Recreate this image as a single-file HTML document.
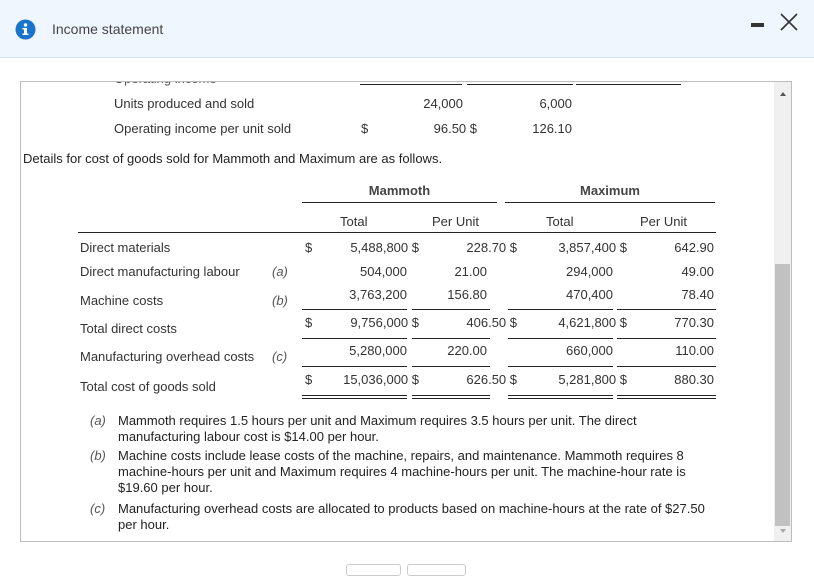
<!DOCTYPE html>
<html><head><meta charset="utf-8"><style>
*{margin:0;padding:0;box-sizing:border-box}
body{width:814px;height:569px;background:#fff;font-family:"Liberation Sans",Arial,sans-serif;color:#333;font-size:13px;position:relative;overflow:hidden}
.a{position:absolute;white-space:nowrap;line-height:15px}
.r{position:absolute;white-space:nowrap;text-align:right;line-height:15px}
.l{position:absolute;height:1px;background:#222}
.hdr{position:absolute;left:0;top:0;width:814px;height:58px;background:#f0f6fd;border-bottom:1px solid #cfe4f8}
.box{position:absolute;left:20px;top:81px;width:772px;height:461px;border:1px solid #bdbdbd;overflow:hidden}
i{font-style:italic;color:#555}
</style></head><body>
<div class="hdr">
<svg style="position:absolute;left:15px;top:19px" width="21" height="21" viewBox="0 0 21 21"><circle cx="10.5" cy="10.5" r="10" fill="#1b74cc"/><rect x="9" y="9" width="3" height="7" fill="#fff"/><rect x="7.5" y="9" width="3" height="1.5" fill="#fff"/><rect x="7.5" y="14.5" width="6" height="1.5" fill="#fff"/><circle cx="10.5" cy="6" r="1.7" fill="#fff"/></svg>
<div class="a" style="left:52px;top:21px;font-size:14px;color:#444;line-height:16px">Income statement</div>
<div style="position:absolute;left:751px;top:23px;width:13px;height:4px;background:#333"></div>
<svg style="position:absolute;left:780px;top:13px" width="18" height="18" viewBox="0 0 18 18"><path d="M1 1L17 17M17 1L1 17" stroke="#333" stroke-width="1.6"/></svg>
</div>
<div class="box">
<div class="a" style="left:93px;top:-11px;color:#555">Operating income</div>
<div style="position:absolute;right:0;top:0;width:17px;height:459px;background:#f0f0f0"></div>
<div style="position:absolute;right:1px;top:182px;width:15px;height:262px;background:#c1c1c1"></div>
<div style="position:absolute;right:5px;top:10px;width:0;height:0;border-left:3px solid transparent;border-right:3px solid transparent;border-bottom:4px solid #555"></div>
<div style="position:absolute;right:5px;top:447px;width:0;height:0;border-left:3px solid transparent;border-right:3px solid transparent;border-top:4px solid #aaa"></div>
</div>
<div class="l" style="left:360px;top:84px;width:102px"></div>
<div class="l" style="left:467px;top:84px;width:106px"></div>
<div class="l" style="left:576px;top:84px;width:105px"></div>
<div class="a" style="left:114px;top:96px">Units produced and sold</div>
<div class="r" style="left:380px;width:83px;top:96px">24,000</div>
<div class="r" style="left:490px;width:82px;top:96px">6,000</div>
<div class="a" style="left:114px;top:121px">Operating income per unit sold</div>
<div class="a" style="left:361px;top:121px">$</div>
<div class="r" style="left:380px;width:97px;top:121px">96.50 $</div>
<div class="r" style="left:490px;width:82px;top:121px">126.10</div>
<div class="a" style="left:23px;top:151px;color:#222">Details for cost of goods sold for Mammoth and Maximum are as follows.</div>

<div class="a" style="left:302px;width:195px;text-align:center;top:183px;font-weight:bold;color:#444">Mammoth</div>
<div class="a" style="left:505px;width:210px;text-align:center;top:183px;font-weight:bold;color:#444">Maximum</div>
<div class="l" style="left:302px;top:202px;width:195px"></div>
<div class="l" style="left:505px;top:202px;width:210px"></div>
<div class="a" style="left:340px;top:214px">Total</div>
<div class="a" style="left:432px;top:214px">Per Unit</div>
<div class="a" style="left:546px;top:214px">Total</div>
<div class="a" style="left:640px;top:214px">Per Unit</div>
<div class="l" style="left:78px;top:232px;width:638px"></div>

<div class="a" style="left:80px;top:240px">Direct materials</div>
<div class="a" style="left:80px;top:264px">Direct manufacturing labour</div><div class="a" style="left:272px;top:264px"><i>(a)</i></div>
<div class="a" style="left:80px;top:293px">Machine costs</div><div class="a" style="left:272px;top:293px"><i>(b)</i></div>
<div class="a" style="left:80px;top:321px">Total direct costs</div>
<div class="a" style="left:80px;top:349px">Manufacturing overhead costs</div><div class="a" style="left:272px;top:349px"><i>(c)</i></div>
<div class="a" style="left:80px;top:379px">Total cost of goods sold</div>

<div class="a" style="left:305px;top:240px">$</div>
<div class="r" style="left:320px;width:99px;top:240px">5,488,800 $</div>
<div class="r" style="left:420px;width:97px;top:240px">228.70 $</div>
<div class="r" style="left:520px;width:107px;top:240px">3,857,400 $</div>
<div class="r" style="left:630px;width:84px;top:240px">642.90</div>

<div class="r" style="left:320px;width:87px;top:264px">504,000</div>
<div class="r" style="left:420px;width:67px;top:264px">21.00</div>
<div class="r" style="left:520px;width:93px;top:264px">294,000</div>
<div class="r" style="left:630px;width:84px;top:264px">49.00</div>

<div class="r" style="left:320px;width:87px;top:287px">3,763,200</div>
<div class="r" style="left:420px;width:67px;top:287px">156.80</div>
<div class="r" style="left:520px;width:93px;top:287px">470,400</div>
<div class="r" style="left:630px;width:84px;top:287px">78.40</div>
<div class="l" style="left:302px;top:309px;width:105px"></div><div class="l" style="left:412px;top:309px;width:78px"></div><div class="l" style="left:508px;top:309px;width:105px"></div><div class="l" style="left:617px;top:309px;width:99px"></div>

<div class="a" style="left:305px;top:315px">$</div>
<div class="r" style="left:320px;width:99px;top:315px">9,756,000 $</div>
<div class="r" style="left:420px;width:97px;top:315px">406.50 $</div>
<div class="r" style="left:520px;width:107px;top:315px">4,621,800 $</div>
<div class="r" style="left:630px;width:84px;top:315px">770.30</div>
<div class="l" style="left:302px;top:338px;width:105px"></div><div class="l" style="left:412px;top:338px;width:78px"></div><div class="l" style="left:508px;top:338px;width:105px"></div><div class="l" style="left:617px;top:338px;width:99px"></div>

<div class="r" style="left:320px;width:87px;top:343px">5,280,000</div>
<div class="r" style="left:420px;width:67px;top:343px">220.00</div>
<div class="r" style="left:520px;width:93px;top:343px">660,000</div>
<div class="r" style="left:630px;width:84px;top:343px">110.00</div>
<div class="l" style="left:302px;top:366px;width:105px"></div><div class="l" style="left:412px;top:366px;width:78px"></div><div class="l" style="left:508px;top:366px;width:105px"></div><div class="l" style="left:617px;top:366px;width:99px"></div>

<div class="a" style="left:305px;top:372px">$</div>
<div class="r" style="left:320px;width:99px;top:372px">15,036,000 $</div>
<div class="r" style="left:420px;width:97px;top:372px">626.50 $</div>
<div class="r" style="left:520px;width:107px;top:372px">5,281,800 $</div>
<div class="r" style="left:630px;width:84px;top:372px">880.30</div>
<div class="l" style="left:302px;top:395px;width:105px"></div><div class="l" style="left:412px;top:395px;width:78px"></div><div class="l" style="left:508px;top:395px;width:105px"></div><div class="l" style="left:617px;top:395px;width:99px"></div>
<div class="l" style="left:302px;top:398px;width:105px"></div><div class="l" style="left:412px;top:398px;width:78px"></div><div class="l" style="left:508px;top:398px;width:105px"></div><div class="l" style="left:617px;top:398px;width:99px"></div>

<div style="position:absolute;left:90px;top:413px;width:640px;color:#222;line-height:16px">
<div class="a" style="left:0;top:0;line-height:16px"><i>(a)</i></div>
<div style="position:absolute;left:28px;top:0;width:620px">Mammoth requires 1.5 hours per unit and Maximum requires 3.5 hours per unit. The direct<br>manufacturing labour cost is $14.00 per hour.</div>
<div class="a" style="left:0;top:35px;line-height:16px"><i>(b)</i></div>
<div style="position:absolute;left:28px;top:35px;width:620px">Machine costs include lease costs of the machine, repairs, and maintenance. Mammoth requires 8<br>machine-hours per unit and Maximum requires 4 machine-hours per unit. The machine-hour rate is<br>$19.60 per hour.</div>
<div class="a" style="left:0;top:88px;line-height:16px"><i>(c)</i></div>
<div style="position:absolute;left:28px;top:88px;width:640px">Manufacturing overhead costs are allocated to products based on machine-hours at the rate of $27.50<br>per hour.</div>
</div>
<div style="position:absolute;left:346px;top:564px;width:55px;height:12px;border:1px solid #ccc;border-radius:3px"></div>
<div style="position:absolute;left:407px;top:564px;width:59px;height:12px;border:1px solid #ccc;border-radius:3px"></div>
</body></html>
